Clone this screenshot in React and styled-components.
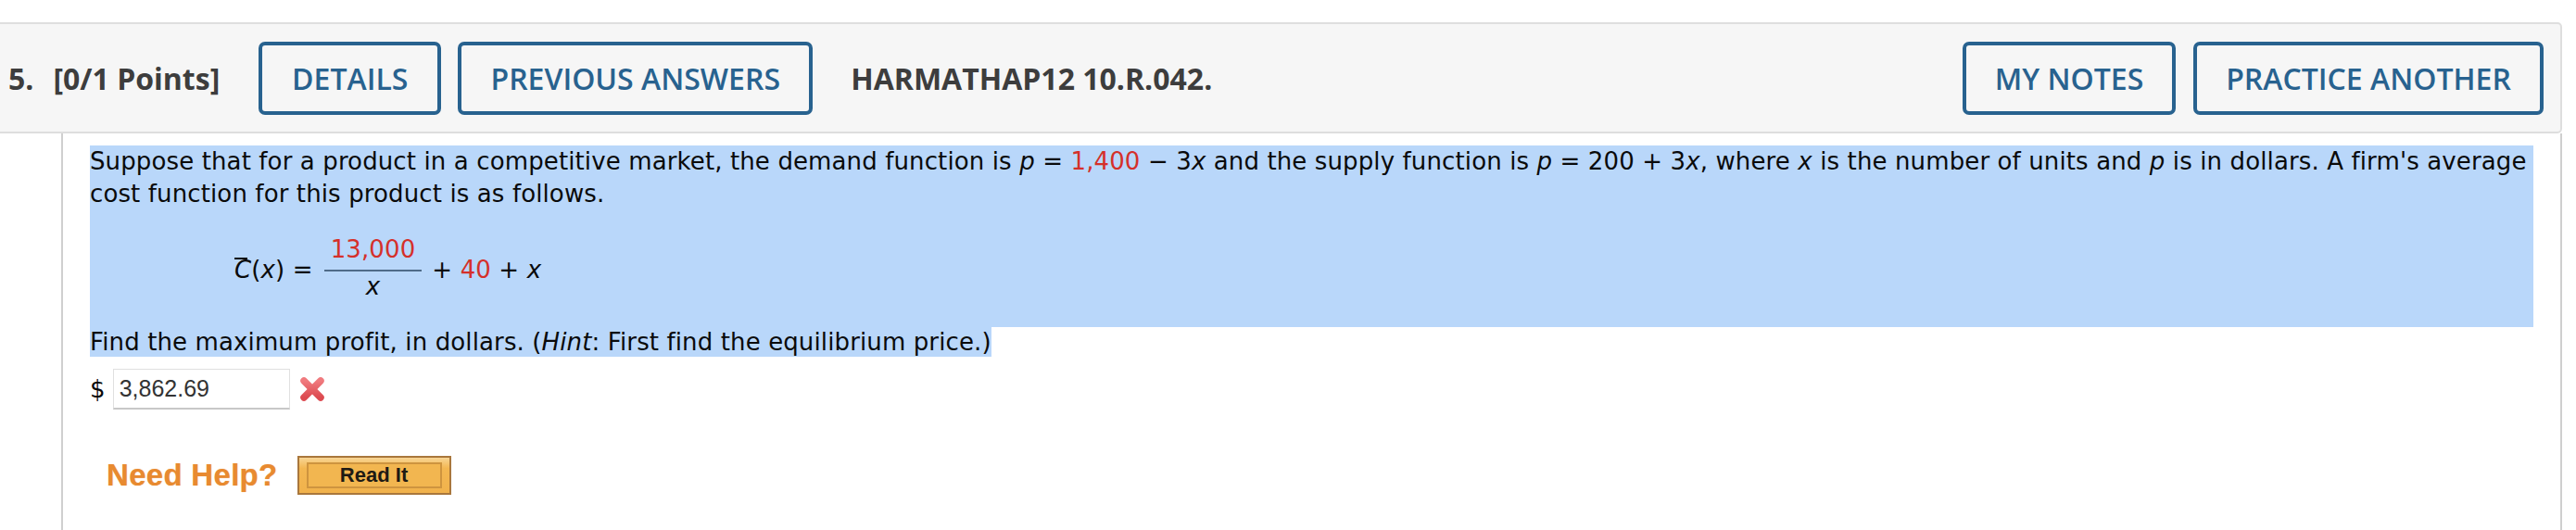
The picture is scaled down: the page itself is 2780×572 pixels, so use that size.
import React from 'react';
import styled, { createGlobalStyle } from 'styled-components';

const GlobalStyle = createGlobalStyle`
  html, body {
    margin: 0;
    padding: 0;
    background: #fff;
  }
`;

const Page = styled.div`
  width: 2765px;
  padding-top: 24px;
  font-family: 'DejaVu Sans', Verdana, sans-serif;
`;

const Header = styled.div`
  display: flex;
  align-items: center;
  box-sizing: border-box;
  height: 120px;
  padding: 0 18px 0 9px;
  background: #f6f6f6;
  border: 2px solid #dedede;
  border-left: none;
  border-radius: 0 5px 5px 0;
  font-family: 'Open Sans', 'DejaVu Sans', sans-serif;
`;

const Label = styled.span`
  font-size: 32px;
  font-weight: 700;
  color: #3d3d3d;
  margin-right: ${p => p.gap || 0}px;
  white-space: nowrap;
`;

const OutlineButton = styled.button`
  box-sizing: border-box;
  width: ${p => p.w}px;
  height: 79px;
  padding: 0;
  margin: 0 ${p => p.gap || 0}px 0 0;
  background: transparent;
  border: 4px solid #28628f;
  border-radius: 7px;
  color: #28628f;
  font-family: 'Open Sans', sans-serif;
  font-size: 32px;
  font-weight: 600;
  text-align: center;
  white-space: nowrap;
`;

const Spacer = styled.div`
  flex: 1;
`;

const Body = styled.div`
  display: flex;
  min-height: 428px;
`;

const Gutter = styled.div`
  width: 66px;
  border-right: 2px solid #cfcfcf;
`;

const Content = styled.div`
  flex: 1;
  padding: 13px 29px 0 29px;
  border-right: 2px solid #cfcfcf;
  color: #0a0a0a;
  font-size: 26px;
  letter-spacing: 0.12px;
`;

const Selected = styled.div`
  background: #b9d7fa;
`;

const Para = styled.p`
  margin: 0;
  line-height: 35px;
`;

const Red = styled.span`
  color: #d5302a;
`;

const Equation = styled.div`
  display: flex;
  align-items: center;
  padding: 27px 0 25px 156px;
  line-height: 30px;
  white-space: pre;
`;

const Bar = styled.span`
  position: relative;
  font-style: italic;
  &::before {
    content: '';
    position: absolute;
    left: 0;
    top: 2px;
    width: 14px;
    height: 2px;
    background: #0a0a0a;
  }
`;

const Fraction = styled.div`
  display: flex;
  flex-direction: column;
  align-items: center;
  padding-bottom: 4px;
  margin: 0 11px 0 12px;
`;

const Numerator = styled.span`
  padding: 0 7px;
`;

const FracLine = styled.div`
  align-self: stretch;
  height: 2px;
  margin: 7px 0 1px;
  background: #4f6b89;
`;

const FindLine = styled.div`
  line-height: 32px;
`;

const FindText = styled.span`
  display: inline-block;
  background: #b9d7fa;
`;

const AnswerRow = styled.div`
  display: flex;
  align-items: center;
  margin-top: 13px;
`;

const Dollar = styled.span`
  margin-right: 8px;
`;

const AnswerBox = styled.div`
  box-sizing: border-box;
  width: 191px;
  height: 44px;
  padding: 0 6px;
  display: flex;
  align-items: center;
  border: 1px solid #e0e0e0;
  border-bottom: 2px solid #c8c8c8;
  font-family: 'Liberation Sans', Arial, sans-serif;
  font-size: 25px;
  letter-spacing: 0;
  color: #333;
  margin-right: 10px;
`;

const HelpRow = styled.div`
  display: flex;
  align-items: center;
  margin-top: 50px;
  padding-left: 18px;
`;

const HelpText = styled.span`
  font-family: 'Liberation Sans', Arial, sans-serif;
  font-size: 33px;
  font-weight: 700;
  letter-spacing: 0.3px;
  color: #e88a30;
  text-shadow: 0 0 1px rgba(232, 138, 48, 0.6);
  margin-right: 21px;
`;

const ReadIt = styled.button`
  box-sizing: border-box;
  width: 166px;
  height: 42px;
  padding: 5px 8px;
  border: 2px solid #a9773c;
  background: linear-gradient(#f8d594 0, #f3b752 30%, #f1b24c 100%);
  display: flex;
  cursor: pointer;
`;

const ReadItInner = styled.span`
  flex: 1;
  display: flex;
  align-items: center;
  justify-content: center;
  border: 2px solid rgba(176, 120, 50, 0.55);
  background: #f2b650;
  font-family: 'Liberation Sans', Arial, sans-serif;
  font-size: 22px;
  font-weight: 700;
  color: #1e1a14;
`;

function WrongIcon() {
  return (
    <svg width="28" height="28" viewBox="0 0 28 28">
      <defs>
        <linearGradient id="xg" x1="0" y1="0" x2="0" y2="1">
          <stop offset="0" stopColor="#f07a7e" />
          <stop offset="1" stopColor="#dc4a50" />
        </linearGradient>
      </defs>
      <g stroke="url(#xg)" strokeWidth="7.5" strokeLinecap="round">
        <line x1="5" y1="5" x2="23" y2="23" />
        <line x1="23" y1="5" x2="5" y2="23" />
      </g>
    </svg>
  );
}

export default function App() {
  return (
    <>
      <GlobalStyle />
      <Page>
        <Header>
          <Label gap={21}>5.</Label>
          <Label gap={42}>[0/1 Points]</Label>
          <OutlineButton w={197} gap={18}>DETAILS</OutlineButton>
          <OutlineButton w={383} gap={41}>PREVIOUS ANSWERS</OutlineButton>
          <Label>HARMATHAP12 10.R.042.</Label>
          <Spacer />
          <OutlineButton w={230} gap={19}>MY NOTES</OutlineButton>
          <OutlineButton w={378}>PRACTICE ANOTHER</OutlineButton>
        </Header>
        <Body>
          <Gutter />
          <Content>
            <Selected>
              <Para>
                Suppose that for a product in a competitive market, the demand function is <i>p</i> = <Red>1,400</Red> − 3<i>x</i> and the supply function is <i>p</i> = 200 + 3<i>x</i>, where <i>x</i> is the number of units and <i>p</i> is in dollars. A firm's average cost function for this product is as follows.
              </Para>
              <Equation>
                <span><Bar>C</Bar>(<i>x</i>) =</span>
                <Fraction>
                  <Numerator><Red>13,000</Red></Numerator>
                  <FracLine />
                  <i>x</i>
                </Fraction>
                <span>+ <Red>40</Red> + <i>x</i></span>
              </Equation>
            </Selected>
            <FindLine>
              <FindText>Find the maximum profit, in dollars. (<i>Hint</i>: First find the equilibrium price.)</FindText>
            </FindLine>
            <AnswerRow>
              <Dollar>$</Dollar>
              <AnswerBox>3,862.69</AnswerBox>
              <WrongIcon />
            </AnswerRow>
            <HelpRow>
              <HelpText>Need Help?</HelpText>
              <ReadIt><ReadItInner>Read It</ReadItInner></ReadIt>
            </HelpRow>
          </Content>
        </Body>
      </Page>
    </>
  );
}
